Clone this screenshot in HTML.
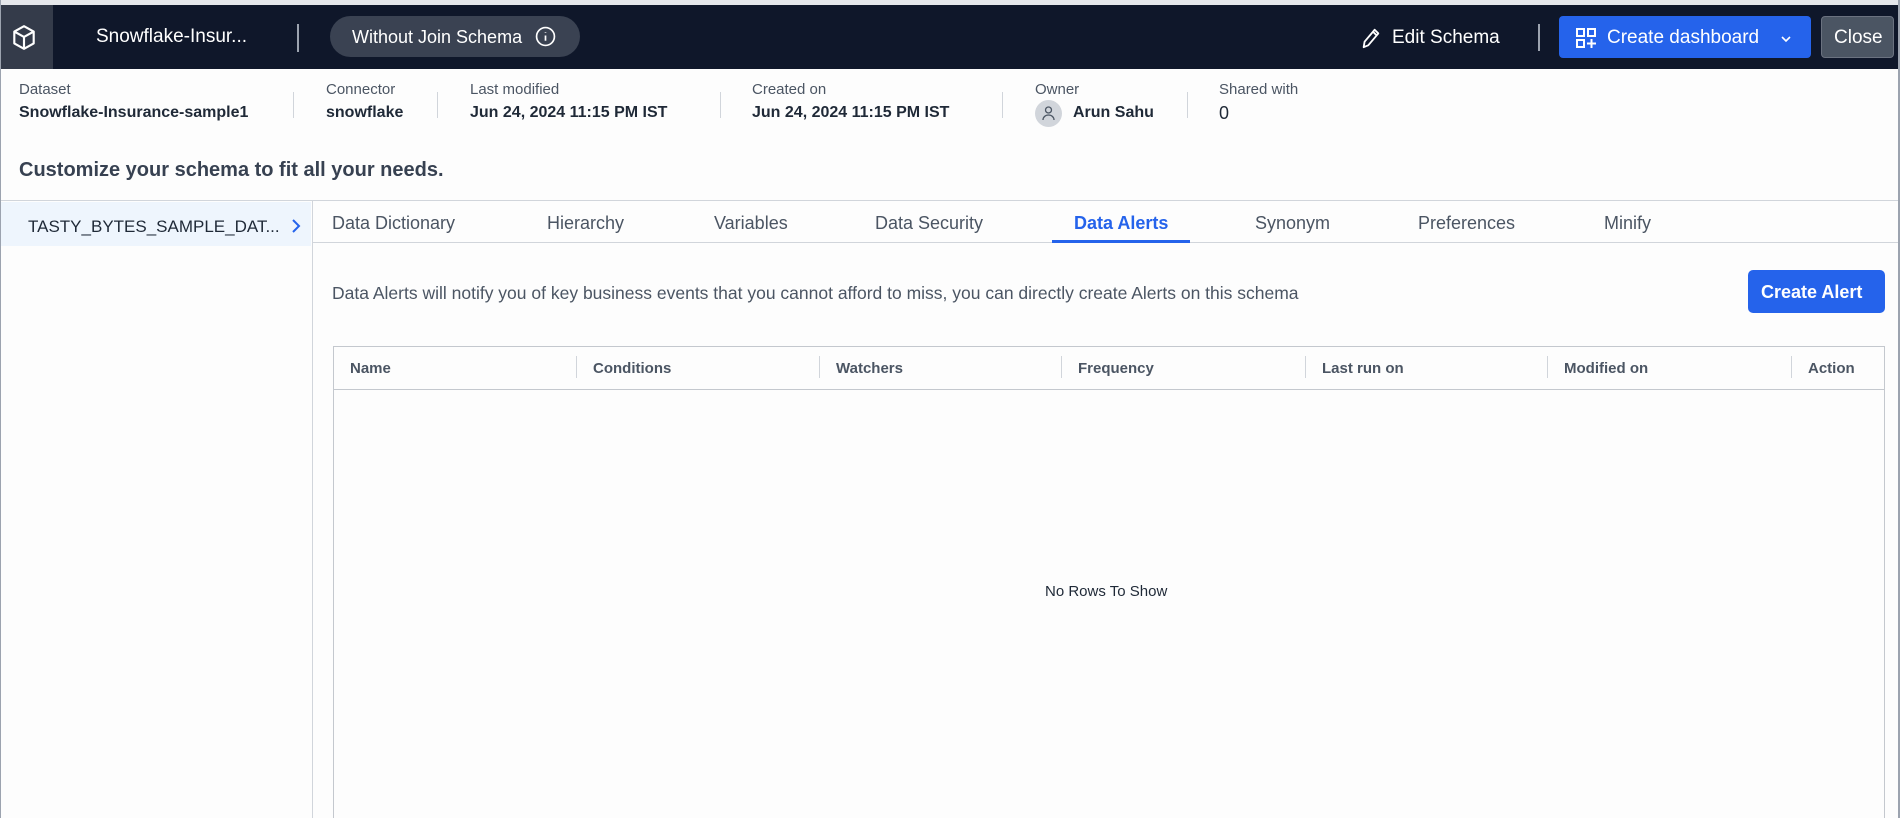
<!DOCTYPE html>
<html><head><meta charset="utf-8"><style>
*{box-sizing:border-box;margin:0;padding:0}
body{width:1900px;height:818px;overflow:hidden;background:#fdfdfd;font-family:"Liberation Sans",Arial,sans-serif;position:relative;color:#1f2937}
.a{position:absolute;white-space:nowrap}
.frame{position:absolute;left:0;top:0;width:1900px;height:818px;border-left:1px solid #9ca3af;border-right:2px solid #9ca3af}
.top{position:absolute;left:0;top:0;width:1900px;height:5px;background:#e5e7eb}
.nav{position:absolute;left:0;top:5px;width:1900px;height:64px;background:#0f172a}
.lbl{font-size:15px;color:#4b5563;top:81px}
.val{font-size:16px;font-weight:bold;color:#1f2937;top:104px}
.vd{position:absolute;top:92px;width:1px;height:26px;background:#d1d5db}
.tab{top:213px;font-size:18px;color:#4b5563}
.th{top:360px;font-size:15px;font-weight:bold;color:#4b5563}
.cs{position:absolute;top:356px;width:1px;height:22px;background:#d1d5db}
</style></head><body>
<div class="top"></div>
<div class="nav">
 <div class="a" style="left:0;top:0;width:53px;height:64px;background:#343b4a"></div>
 <svg class="a" style="left:11px;top:19px" width="26" height="28" viewBox="0 0 24 26" fill="none" stroke="#fff" stroke-width="2" stroke-linejoin="round"><path d="M12 2 L21 7 V18 L12 23 L3 18 V7 Z M3 7 L12 12 L21 7 M12 12 V23"/></svg>
 <div class="a" style="left:96px;top:21px;font-size:19px;color:#fff">Snowflake-Insur...</div>
 <div class="a" style="left:297px;top:19px;width:2px;height:28px;background:#9ca3af"></div>
 <div class="a" style="left:330px;top:11px;width:250px;height:41px;border-radius:21px;background:#3a4252"></div>
 <div class="a" style="left:352px;top:22px;font-size:18px;color:#fff">Without Join Schema</div>
 <svg class="a" style="left:535px;top:21px" width="21" height="21" viewBox="0 0 20 20" fill="none" stroke="#fff" stroke-width="1.6"><circle cx="10" cy="10" r="8.5"/><path d="M10 9v5M10 6v.5"/></svg>
 <svg class="a" style="left:1360px;top:21px" width="22" height="24" viewBox="0 0 24 26" fill="none" stroke="#fff" stroke-width="2" stroke-linejoin="round"><path d="M4 23 L5 17 L16 4 L20 8 L9 21 Z M14 6 L18 10"/></svg>
 <div class="a" style="left:1392px;top:22px;font-size:19px;color:#fff">Edit Schema</div>
 <div class="a" style="left:1538px;top:19px;width:2px;height:27px;background:#9ca3af"></div>
 <div class="a" style="left:1559px;top:11px;width:252px;height:42px;border-radius:4px;background:#2563eb"></div>
 <svg class="a" style="left:1575px;top:22px" width="22" height="22" viewBox="0 0 22 22" fill="none" stroke="#fff" stroke-width="2"><rect x="2" y="2" width="7" height="7"/><rect x="13" y="2" width="7" height="7"/><rect x="2" y="13" width="7" height="7"/><path d="M16.5 12v9M12 16.5h9"/></svg>
 <div class="a" style="left:1607px;top:22px;font-size:19px;color:#fff">Create dashboard</div>
 <svg class="a" style="left:1780px;top:30px" width="12" height="8" viewBox="0 0 12 8" fill="none" stroke="#fff" stroke-width="1.6"><path d="M2 2l4 4 4-4"/></svg>
 <div class="a" style="left:1821px;top:11px;width:73px;height:42px;border-radius:4px;background:#4b5563;border:1px solid #6b7280"></div>
 <div class="a" style="left:1834px;top:22px;font-size:19px;color:#fff">Close</div>
</div>
<div class="a lbl" style="left:19px">Dataset</div><div class="a val" style="left:19px">Snowflake-Insurance-sample1</div>
<div class="vd" style="left:293px"></div>
<div class="a lbl" style="left:326px">Connector</div><div class="a val" style="left:326px">snowflake</div>
<div class="vd" style="left:437px"></div>
<div class="a lbl" style="left:470px">Last modified</div><div class="a val" style="left:470px">Jun 24, 2024 11:15 PM IST</div>
<div class="vd" style="left:720px"></div>
<div class="a lbl" style="left:752px">Created on</div><div class="a val" style="left:752px">Jun 24, 2024 11:15 PM IST</div>
<div class="vd" style="left:1002px"></div>
<div class="a lbl" style="left:1035px">Owner</div>
<div class="a" style="left:1035px;top:100px;width:27px;height:27px;border-radius:50%;background:#d1d5db"></div>
<svg class="a" style="left:1041px;top:105px" width="15" height="16" viewBox="0 0 15 16" fill="none" stroke="#4b5563" stroke-width="1.3"><circle cx="7.5" cy="5" r="3"/><path d="M2 15c0-3 2.5-5 5.5-5s5.5 2 5.5 5"/></svg>
<div class="a val" style="left:1073px">Arun Sahu</div>
<div class="vd" style="left:1187px"></div>
<div class="a lbl" style="left:1219px">Shared with</div><div class="a" style="left:1219px;top:103px;font-size:18px;color:#1f2937">0</div>
<div class="a" style="left:19px;top:159px;font-size:20px;font-weight:bold;color:#374151">Customize your schema to fit all your needs.</div>
<div class="a" style="left:0;top:200px;width:1900px;height:1px;background:#d1d5db"></div>
<div class="a" style="left:0;top:202px;width:311px;height:44px;background:#eef5fd"></div>
<div class="a" style="left:28px;top:217px;font-size:17px;color:#1f2937">TASTY_BYTES_SAMPLE_DAT...</div>
<svg class="a" style="left:291px;top:218px" width="10" height="16" viewBox="0 0 10 16" fill="none" stroke="#2563eb" stroke-width="2"><path d="M2 2l6 6-6 6"/></svg>
<div class="a" style="left:312px;top:201px;width:1px;height:617px;background:#d1d5db"></div>
<div class="a tab" style="left:332px">Data Dictionary</div>
<div class="a tab" style="left:547px">Hierarchy</div>
<div class="a tab" style="left:714px">Variables</div>
<div class="a tab" style="left:875px">Data Security</div>
<div class="a tab" style="left:1074px;color:#2563eb;font-weight:bold">Data Alerts</div>
<div class="a tab" style="left:1255px">Synonym</div>
<div class="a tab" style="left:1418px">Preferences</div>
<div class="a tab" style="left:1604px">Minify</div>
<div class="a" style="left:313px;top:242px;width:1587px;height:1px;background:#d1d5db"></div>
<div class="a" style="left:1052px;top:240px;width:138px;height:3px;background:#2563eb"></div>
<div class="a" style="left:332px;top:283px;font-size:17.5px;color:#4b5563">Data Alerts will notify you of key business events that you cannot afford to miss, you can directly create Alerts on this schema</div>
<div class="a" style="left:1748px;top:270px;width:137px;height:43px;border-radius:5px;background:#2563eb"></div>
<div class="a" style="left:1761px;top:282px;font-size:18px;font-weight:bold;color:#fff">Create Alert</div>
<div class="a" style="left:333px;top:346px;width:1552px;height:472px;border:1px solid #c4c8ce;border-bottom:none;background:#fdfdfd"></div>
<div class="a" style="left:333px;top:389px;width:1552px;height:1px;background:#c4c8ce"></div>
<div class="a th" style="left:350px">Name</div>
<div class="a th" style="left:593px">Conditions</div>
<div class="a th" style="left:836px">Watchers</div>
<div class="a th" style="left:1078px">Frequency</div>
<div class="a th" style="left:1322px">Last run on</div>
<div class="a th" style="left:1564px">Modified on</div>
<div class="a th" style="left:1808px">Action</div>
<div class="cs" style="left:576px"></div><div class="cs" style="left:819px"></div><div class="cs" style="left:1061px"></div><div class="cs" style="left:1305px"></div><div class="cs" style="left:1547px"></div><div class="cs" style="left:1791px"></div>
<div class="a" style="left:1045px;top:583px;font-size:15px;color:#1f2937">No Rows To Show</div>
<div class="frame"></div>
</body></html>
